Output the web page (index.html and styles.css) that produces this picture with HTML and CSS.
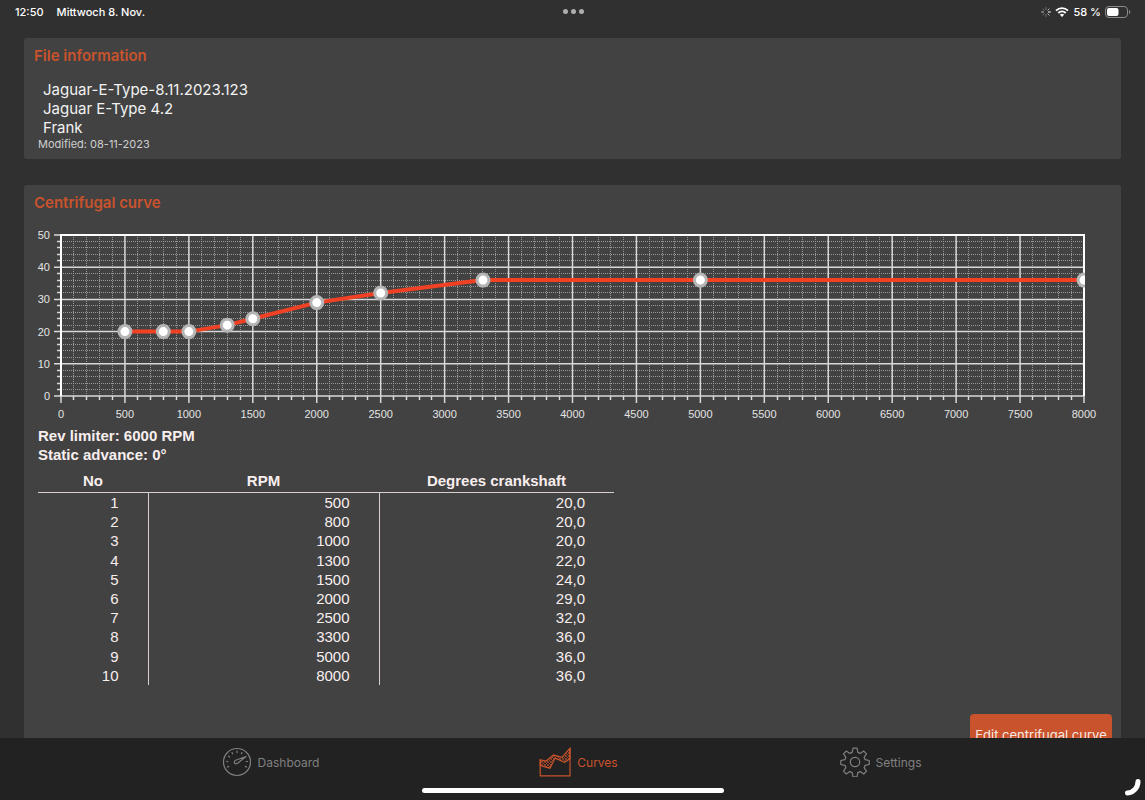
FILE: index.html
```html
<!DOCTYPE html>
<html lang="de">
<head>
<meta charset="utf-8">
<meta name="viewport" content="width=device-width, initial-scale=1">
<title>Curves</title>
<link rel="stylesheet" href="styles.css">
</head>
<body>
<header class="status">
  <div class="status-left"><span>12:50</span><span>Mittwoch 8. Nov.</span></div>
  <div class="dots"><i></i><i></i><i></i></div>
  <div class="status-right">
    <svg class="spinner" width="10" height="10" viewBox="0 0 10 10" fill="none" stroke-linecap="round" aria-hidden="true">
      <g stroke="#777"><path d="M5 .6v2M5 7.4v2M1.9 1.9l1.3 1.3M1.9 8.1l1.3-1.3"/></g>
      <g stroke="#bbb"><path d="M.6 5h2M8.1 1.9 6.8 3.2M8.1 8.1 6.8 6.8"/></g>
      <path stroke="#fff" d="M7.4 5h2"/>
    </svg>
    <svg width="14" height="10" viewBox="0 0 14 10" fill="none" stroke="#fff" aria-hidden="true">
      <path stroke-width="1.9" d="M1 3.6a8.6 8.6 0 0 1 12 0"/>
      <path stroke-width="1.9" d="M3.3 6a5.3 5.3 0 0 1 7.4 0"/>
      <path fill="#fff" stroke="none" d="M4.9 7.7a3 3 0 0 1 4.2 0L7 9.9z"/>
    </svg>
    <span>58 %</span>
    <svg width="26" height="12" viewBox="0 0 26 12" aria-hidden="true">
      <rect x=".5" y=".5" width="22" height="11" rx="3.5" fill="none" stroke="#8a8a8a"/>
      <rect x="2" y="2" width="11.5" height="8" rx="2" fill="#fff"/>
      <path d="M24 4v4c1.8-.8 1.8-3.2 0-4z" fill="#8a8a8a"/>
    </svg>
  </div>
</header>

<main class="content">
  <section class="panel">
    <h2>File information</h2>
    <div class="file">
      <p>Jaguar-E-Type-8.11.2023.123</p>
      <p>Jaguar E-Type 4.2</p>
      <p>Frank</p>
    </div>
    <p class="modified">Modified: 08-11-2023</p>
  </section>

  <section class="panel">
    <h2>Centrifugal curve</h2>
    <svg class="chart" id="chart" viewBox="24 225 1097 200" role="img" aria-label="Centrifugal curve, degrees by RPM">
      <defs><clipPath id="plot"><rect x="60" y="234" width="1025" height="163"/></clipPath></defs>
    </svg>
    <div class="summary">
      <p>Rev limiter: 6000 RPM</p>
      <p>Static advance: 0°</p>
    </div>
    <table class="points">
      <thead><tr><th scope="col" class="no">No</th><th scope="col" class="rpm">RPM</th><th scope="col">Degrees crankshaft</th></tr></thead>
      <tbody>
        <tr><td>1</td><td>500</td><td>20,0</td></tr>
        <tr><td>2</td><td>800</td><td>20,0</td></tr>
        <tr><td>3</td><td>1000</td><td>20,0</td></tr>
        <tr><td>4</td><td>1300</td><td>22,0</td></tr>
        <tr><td>5</td><td>1500</td><td>24,0</td></tr>
        <tr><td>6</td><td>2000</td><td>29,0</td></tr>
        <tr><td>7</td><td>2500</td><td>32,0</td></tr>
        <tr><td>8</td><td>3300</td><td>36,0</td></tr>
        <tr><td>9</td><td>5000</td><td>36,0</td></tr>
        <tr><td>10</td><td>8000</td><td>36,0</td></tr>
      </tbody>
    </table>
    <button class="edit" type="button">Edit centrifugal curve</button>
  </section>
</main>

<nav class="tabs">
  <a href="#dashboard">
    <svg width="30" height="30" viewBox="0 0 30 30" fill="none" stroke="currentColor" stroke-width="1.2" stroke-linecap="round" aria-hidden="true">
      <circle cx="15" cy="15" r="13.5"/>
      <path d="M15 4.2v1.4M10 5.6l.6 1.200M6.6 9.2l1 .8M4.5 14.5h1.4M5.5 20l1.200-.6M20 5.6l-.6 1.200M25.500 14.5h-1.4M24.500 20l-1.200-.6"/>
      <path stroke-linejoin="round" d="M24 9.500 13.600 13.200c-2 .8-1.600 3.600.5 3.600.6 0 1.100-.2 1.500-.6z"/>
    </svg>
    <span>Dashboard</span>
  </a>
  <a href="#curves" class="active" aria-current="page">
    <svg width="32" height="30" viewBox="0 0 32 30" fill="none" stroke="currentColor" stroke-width="1.2" aria-hidden="true">
      <defs><pattern id="mesh" width="3" height="3" patternUnits="userSpaceOnUse"><path d="M0 0l3 3M3 0 0 3" stroke="#c9532c" stroke-width=".6"/></pattern></defs>
      <path fill="url(#mesh)" d="M1.200 12.800 7.200 14l7.300-6 8.500 2.300 8-9v10.300l-5.300 3.700-9.700-4L11 21.200 1.200 18.500z"/>
      <path d="M1.200 12.500v16.300H31V1.300"/>
    </svg>
    <span>Curves</span>
  </a>
  <a href="#settings">
    <svg width="30" height="30" viewBox="0 0 30 30" fill="none" stroke="currentColor" stroke-width="1.2" stroke-linejoin="round" aria-hidden="true">
      <circle cx="15" cy="15" r="4.7"/>
      <path d="M13 1.200h4l.8 4.200 2.400 1 3.500-2.400 2.800 2.800-2.400 3.500 1 2.400 4.100.8v4l-4.100.8-1 2.400 2.400 3.500-2.800 2.800-3.500-2.400-2.400 1-.8 4.200h-4l-.8-4.200-2.400-1-3.500 2.400-2.800-2.800 2.400-3.500-1-2.400-4.100-.8v-4l4.100-.8 1-2.400-2.400-3.500 2.800-2.800 3.500 2.400 2.400-1z"/>
    </svg>
    <span>Settings</span>
  </a>
  <div class="home-bar"></div>
  <svg class="corner" width="20" height="20" viewBox="0 0 20 20" fill="none" stroke="#fff" stroke-width="5" stroke-linecap="round" aria-hidden="true"><path d="M15 3.500C15 9.500 10.500 14.500 4.500 15"/></svg>
</nav>
<script src="chart.js"></script>
</body>
</html>
```

FILE: styles.css
```css
* { box-sizing: border-box; }
body {
  margin: 0;
  height: 100vh;
  display: grid;
  grid-template-rows: 23px minmax(0, 1fr) 62px;
  background: #303030;
  color: #f2f2f2;
  font-family: Inter, "Liberation Sans", sans-serif;
}
h2, p { margin: 0; }

.status {
  display: grid;
  grid-template-columns: 1fr auto 1fr;
  align-items: center;
  padding: 0 14px 0 15px;
  font-size: 11px;
  font-weight: 500;
  color: #fff;
}
.status-left { display: flex; gap: 13px; }
.status-right { display: flex; gap: 4px; align-items: center; justify-content: flex-end; }
.dots { display: flex; gap: 3px; }
.dots i { width: 5px; height: 5px; border-radius: 50%; background: #adadad; }

.content {
  overflow: auto;
  scrollbar-width: none;
  padding: 15px 24px;
  display: flex;
  flex-direction: column;
  gap: 26px;
}
.panel {
  flex: none;
  display: flex;
  flex-direction: column;
  background: #424242;
  border-radius: 3px;
  padding: 8px 0;
}
.panel h2 {
  padding: 0 10px;
  color: #c9532c;
  font-size: 15px;
  font-weight: 600;
  line-height: 20px;
}
.file { padding: 14px 19px 0; font-size: 15px; line-height: 19px; }
.modified { padding: 0 14px; font-size: 11px; line-height: 14px; color: #cfcfcf; }

.chart { display: block; width: 100%; height: auto; margin-top: 12px; }
.chart text { font: 11px "Liberation Sans", Arial, sans-serif; fill: #e4e4e4; }
.minor { stroke: #989898; stroke-width: 1; stroke-dasharray: 1 1; }
.major { stroke: #d8d8d8; stroke-width: 1.5; }
.tick { stroke: #d8d8d8; stroke-width: 1.5; }
.frame { fill: none; stroke: #fff; stroke-width: 2; }
.curve { fill: none; stroke: #f14124; stroke-width: 4; }
.knob { fill: #fff; stroke: #b5b5b5; stroke-width: 3; }

.summary, .points {
  font-family: "Liberation Sans", Arial, sans-serif;
  font-size: 15px;
  line-height: 19px;
  color: #f8eeee;
}
.summary { padding: 1px 14px 0; font-weight: 700; }
.points {
  width: 576px;
  height: 214px;
  margin: 7px 14px 29px;
  border-collapse: collapse;
  table-layout: fixed;
}
.points th { height: 21px; padding: 0 0 2px; text-align: center; border-bottom: 1px solid #d9cfcf; }
.points .no { width: 110px; }
.points .rpm { width: 231px; }
.points td { padding: 0 29px 0 0; text-align: right; }
.points td + td { border-left: 1px solid #d9cfcf; }

.edit {
  align-self: flex-end;
  margin-right: 9px;
  width: 142px;
  height: 42px;
  padding: 0;
  border: 0;
  border-radius: 4px;
  background: #c9532c;
  color: #f6e9e4;
  font-family: inherit;
  font-size: 13px;
  white-space: nowrap;
}

.tabs {
  position: relative;
  display: grid;
  grid-template-columns: repeat(3, 1fr);
  align-items: start;
  padding: 9px 112px 0 118px;
  background: #222;
}
.tabs a {
  display: flex;
  justify-content: center;
  align-items: center;
  gap: 6px;
  color: #808080;
  font-size: 12px;
  text-decoration: none;
}
.tabs .active { padding-left: 6px; color: #c9532c; }
.home-bar {
  position: absolute;
  bottom: 7px;
  left: 50%;
  width: 302px;
  height: 5px;
  margin-left: -151px;
  border-radius: 3px;
  background: #fff;
}
.corner { position: absolute; right: 2px; bottom: 2px; }
```

FILE: chart.js
```js
const svg = document.getElementById('chart');
const points = [[500, 20], [800, 20], [1000, 20], [1300, 22], [1500, 24], [2000, 29], [2500, 32], [3300, 36], [5000, 36], [8000, 36]];
const left = 61, right = 1084, top_ = 235, bottom = 396;
const px = v => left + v * (right - left) / 8000;
const py = v => bottom - v * (bottom - top_) / 50;
const snap = v => Math.floor(v) + 0.5;

function add(name, attrs, text) {
  const el = document.createElementNS('http://www.w3.org/2000/svg', name);
  for (const key in attrs) el.setAttribute(key, attrs[key]);
  if (text !== undefined) el.textContent = text;
  svg.appendChild(el);
}

let minor = '', major = '', ticks = '';
for (let v = 0; v <= 8000; v += 100) {
  const isMajor = v % 500 === 0;
  const x = isMajor ? px(v) : snap(px(v));
  const line = `M${x} ${top_}V${bottom}`;
  if (isMajor) major += line; else minor += line;
  ticks += `M${x} ${bottom}v${isMajor ? 7 : 4}`;
  if (isMajor) add('text', { x: px(v), y: 418, 'text-anchor': 'middle' }, v);
}
for (let v = 0; v <= 50; v += 2) {
  const isMajor = v % 10 === 0;
  const y = isMajor ? py(v) : snap(py(v));
  const line = `M${left} ${y}H${right}`;
  if (isMajor) major += line; else minor += line;
  ticks += `M${left} ${y}h${isMajor ? -7 : -4}`;
  if (isMajor) add('text', { x: 50, y: py(v) + 4, 'text-anchor': 'end' }, v);
}
add('path', { class: 'minor', d: minor });
add('path', { class: 'major', d: major });
add('path', { class: 'tick', d: ticks });
add('path', { class: 'frame', d: `M${left} ${bottom}V${top_}H${right}V${bottom}` });
add('polyline', { class: 'curve', points: points.map(([x, y]) => `${px(x)},${py(y)}`).join(' ') });
for (const [x, y] of points) add('circle', { class: 'knob', cx: px(x), cy: py(y), r: 6, 'clip-path': 'url(#plot)' });
```
